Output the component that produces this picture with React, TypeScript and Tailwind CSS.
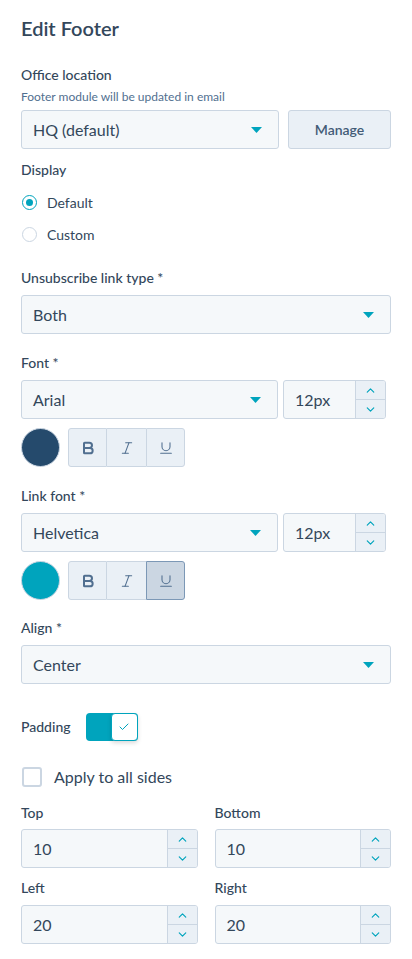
import React from 'react';
import { Bold, Italic, Underline, ChevronUp, ChevronDown, Check } from 'lucide-react';

const font = { fontFamily: 'Lato, "Liberation Sans", sans-serif' };

function Caret() {
  return (
    <svg width="11" height="6" viewBox="0 0 11 6" className="shrink-0">
      <path d="M0 0 L11 0 L5.5 6 Z" fill="#00a4bd" />
    </svg>
  );
}

function Select({ value, className = '' }: { value: string; className?: string }) {
  return (
    <div
      className={`flex h-[39px] items-center justify-between rounded-[3px] border border-[#cbd6e2] bg-[#f5f8fa] pl-[11px] pr-[16px] text-[16px] text-[#33475b] ${className}`}
    >
      <span>{value}</span>
      <Caret />
    </div>
  );
}

function NumberInput({ value, className = '' }: { value: string; className?: string }) {
  return (
    <div className={`flex h-[39px] overflow-hidden rounded-[3px] border border-[#cbd6e2] bg-[#f5f8fa] ${className}`}>
      <div className="flex flex-1 items-center pl-[11px] text-[16px] text-[#33475b]">{value}</div>
      <div className="flex w-[30px] flex-col border-l border-[#cbd6e2] bg-[#eaf0f6]">
        <div className="flex flex-1 items-center justify-center border-b border-[#cbd6e2]">
          <ChevronUp size={13} strokeWidth={2.2} color="#00a4bd" />
        </div>
        <div className="flex flex-1 items-center justify-center">
          <ChevronDown size={13} strokeWidth={2.2} color="#00a4bd" />
        </div>
      </div>
    </div>
  );
}

function Label({ children, className = '' }: { children: React.ReactNode; className?: string }) {
  return <div className={`text-[14px] font-medium leading-[20px] text-[#33475b] ${className}`}>{children}</div>;
}

function StyleRow({ color, underlineActive }: { color: string; underlineActive?: boolean }) {
  return (
    <div className="flex items-center gap-[8px]">
      <div className="h-[39px] w-[39px] rounded-full border border-[#cbd6e2]" style={{ backgroundColor: color }} />
      <div className="flex h-[39px]">
        <div className="flex w-[39px] items-center justify-center rounded-l-[3px] border border-[#cbd6e2] bg-[#eaf0f6]">
          <Bold size={16} strokeWidth={3} color="#516f90" />
        </div>
        <div className="flex w-[39px] items-center justify-center border-y border-[#cbd6e2] bg-[#eaf0f6]">
          <Italic size={16} strokeWidth={1.6} color="#516f90" />
        </div>
        <div
          className={
            underlineActive
              ? 'flex w-[39px] items-center justify-center rounded-r-[3px] border border-[#7c98b6] bg-[#cbd6e2]'
              : 'flex w-[39px] items-center justify-center rounded-r-[3px] border border-[#cbd6e2] bg-[#eaf0f6]'
          }
        >
          <Underline size={16} strokeWidth={1.6} color="#516f90" />
        </div>
      </div>
    </div>
  );
}

function Radio({ label, checked }: { label: string; checked?: boolean }) {
  return (
    <div className="flex h-[20px] items-center gap-[10px]">
      <div
        className={`ml-[1px] flex h-[15px] w-[15px] items-center justify-center rounded-full border bg-white ${
          checked ? 'border-[#00a4bd]' : 'border-[#cbd6e2]'
        }`}
      >
        {checked && <div className="h-[7px] w-[7px] rounded-full bg-[#00a4bd]" />}
      </div>
      <span className="text-[14px] text-[#33475b]">{label}</span>
    </div>
  );
}

export default function App() {
  return (
    <div className="min-h-screen w-[412px] bg-white px-[21px] pt-[16px]" style={font}>
      <h1 className="text-[20px] font-semibold leading-[24px] text-[#33475b]">Edit Footer</h1>

      <Label className="mt-[25px]">Office location</Label>
      <div className="mt-[4px] text-[12px] leading-[16px] text-[#516f90]">Footer module will be updated in email</div>
      <div className="mt-[5px] flex gap-[9px]">
        <Select value="HQ (default)" className="w-[258px]" />
        <div className="flex h-[39px] flex-1 items-center justify-center rounded-[3px] border border-[#cbd6e2] bg-[#eaf0f6] text-[14px] font-semibold text-[#425b76]">
          Manage
        </div>
      </div>

      <Label className="mt-[11px]">Display</Label>
      <div className="mt-[12px]">
        <Radio label="Default" checked />
      </div>
      <div className="mt-[12px]">
        <Radio label="Custom" />
      </div>

      <Label className="mt-[24px]">Unsubscribe link type *</Label>
      <Select value="Both" className="mt-[7px]" />

      <Label className="mt-[19px]">Font *</Label>
      <div className="mt-[7px] flex gap-[5px]">
        <Select value="Arial" className="w-[257px]" />
        <NumberInput value="12px" className="w-[103px]" />
      </div>
      <div className="mt-[9px]">
        <StyleRow color="#254a6c" />
      </div>

      <Label className="mt-[19px]">Link font *</Label>
      <div className="mt-[7px] flex gap-[5px]">
        <Select value="Helvetica" className="w-[257px]" />
        <NumberInput value="12px" className="w-[103px]" />
      </div>
      <div className="mt-[9px]">
        <StyleRow color="#00a4bd" underlineActive />
      </div>

      <Label className="mt-[18px]">Align *</Label>
      <Select value="Center" className="mt-[7px]" />

      <div className="mt-[29px] flex items-center gap-[15px]">
        <Label>Padding</Label>
        <div className="flex h-[28px] w-[52px] rounded-[4px] bg-[#00a4bd]">
          <div className="ml-auto flex h-[28px] w-[27px] items-center justify-center rounded-[4px] border border-[#00a4bd] bg-white shadow-[0_2px_4px_rgba(0,0,0,0.15)]">
            <Check size={12} strokeWidth={2} color="#00a4bd" />
          </div>
        </div>
      </div>

      <div className="mt-[26px] flex h-[20px] items-center gap-[12px]">
        <div className="ml-[1px] h-[20px] w-[20px] rounded-[3px] border-2 border-[#cbd6e2] bg-white" />
        <span className="text-[16px] text-[#33475b]">Apply to all sides</span>
      </div>

      <div className="mt-[16px] grid grid-cols-2 gap-x-[17px]">
        <div>
          <Label>Top</Label>
          <NumberInput value="10" className="mt-[6px]" />
        </div>
        <div>
          <Label>Bottom</Label>
          <NumberInput value="10" className="mt-[6px]" />
        </div>
        <div className="mt-[10px]">
          <Label>Left</Label>
          <NumberInput value="20" className="mt-[7px]" />
        </div>
        <div className="mt-[10px]">
          <Label>Right</Label>
          <NumberInput value="20" className="mt-[7px]" />
        </div>
      </div>
    </div>
  );
}
